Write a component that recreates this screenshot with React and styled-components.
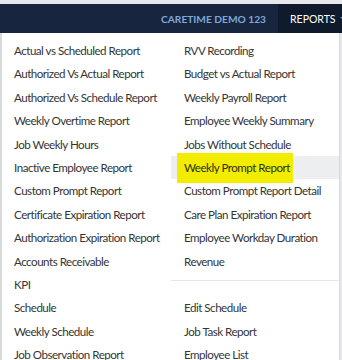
import React from 'react';
import styled, { createGlobalStyle } from 'styled-components';

const GlobalStyle = createGlobalStyle`
  body {
    margin: 0;
    background: #e6e8eb;
    font-family: Lato, "Liberation Sans", sans-serif;
  }
`;

const leftItems = [
  'Actual vs Scheduled Report',
  'Authorized Vs Actual Report',
  'Authorized Vs Schedule Report',
  'Weekly Overtime Report',
  'Job Weekly Hours',
  'Inactive Employee Report',
  'Custom Prompt Report',
  'Certificate Expiration Report',
  'Authorization Expiration Report',
  'Accounts Receivable',
  'KPI',
  'Schedule',
  'Weekly Schedule',
  'Job Observation Report'
];

const rightItems = [
  'RVV Recording',
  'Budget vs Actual Report',
  'Weekly Payroll Report',
  'Employee Weekly Summary',
  'Jobs Without Schedule',
  'Weekly Prompt Report',
  'Custom Prompt Report Detail',
  'Care Plan Expiration Report',
  'Employee Workday Duration',
  'Revenue',
  '-',
  'Edit Schedule',
  'Job Task Report',
  'Employee List'
];

const Page = styled.div`
  height: 360px;
  overflow: hidden;
  padding-top: 4px;
  box-sizing: border-box;
`;

const NavBar = styled.div`
  height: 29px;
  background: #17263e;
  display: flex;
  justify-content: flex-end;
  align-items: stretch;
`;

const Brand = styled.div`
  display: flex;
  align-items: center;
  padding-right: 12px;
  color: #7ea6d8;
  font-weight: 700;
  font-size: 10.2px;
  letter-spacing: 0;
`;

const Tab = styled.div`
  display: flex;
  align-items: center;
  gap: 4px;
  width: 64px;
  padding-left: 12px;
  box-sizing: border-box;
  background: #0f1b2c;
  color: #ffffff;
  font-size: 10.5px;
  white-space: nowrap;
`;

const Caret = styled.span`
  flex: none;
  width: 0;
  height: 0;
  border-left: 3px solid transparent;
  border-right: 3px solid transparent;
  border-top: 3px solid #5b8fd0;
`;

const Menu = styled.div`
  margin: 0 2px 0 0;
  background: #ffffff;
  border-left: 2px solid #d9dadc;
  border-right: 1px solid #d6d8da;
  display: grid;
  grid-template-columns: 169px 1fr;
  padding-top: 6px;
`;

const Column = styled.ul`
  list-style: none;
  margin: 0;
  padding: 0;
`;

const Item = styled.li`
  height: 23.4px;
  line-height: 23.4px;
  padding-left: ${p => p.$indent}px;
  font-size: 11.6px;
  letter-spacing: -0.5px;
  color: #353535;
  white-space: nowrap;
  background: ${p => (p.$active ? '#eceeef' : 'transparent')};
`;

const Marker = styled.span`
  display: inline-block;
  height: 30px;
  line-height: 30px;
  margin: -3.3px 0 -3.3px -7px;
  padding: 0 3px 0 7px;
  vertical-align: top;
  background: #f1ec00;
  color: #2f2f10;
`;

const Divider = styled.li`
  height: 23.4px;
  box-sizing: border-box;
  padding-top: 7px;
  &::before {
    content: '';
    display: block;
    height: 1px;
    background: #e6e6e6;
    margin-right: -1px;
  }
`;

const App = () => {
  return (
    <Page>
      <GlobalStyle />
      <NavBar>
        <Brand>CARETIME DEMO 123</Brand>
        <Tab>
          REPORTS <Caret />
        </Tab>
      </NavBar>
      <Menu>
        <Column>
          {leftItems.map(label => (
            <Item key={label} $indent={12}>{label}</Item>
          ))}
        </Column>
        <Column>
          {rightItems.map(label =>
            label === '-' ? (
              <Divider key="divider" />
            ) : label === 'Weekly Prompt Report' ? (
              <Item key={label} $indent={13} $active>
                <Marker>{label}</Marker>
              </Item>
            ) : (
              <Item key={label} $indent={13}>{label}</Item>
            )
          )}
        </Column>
      </Menu>
    </Page>
  );
};

export default App;
